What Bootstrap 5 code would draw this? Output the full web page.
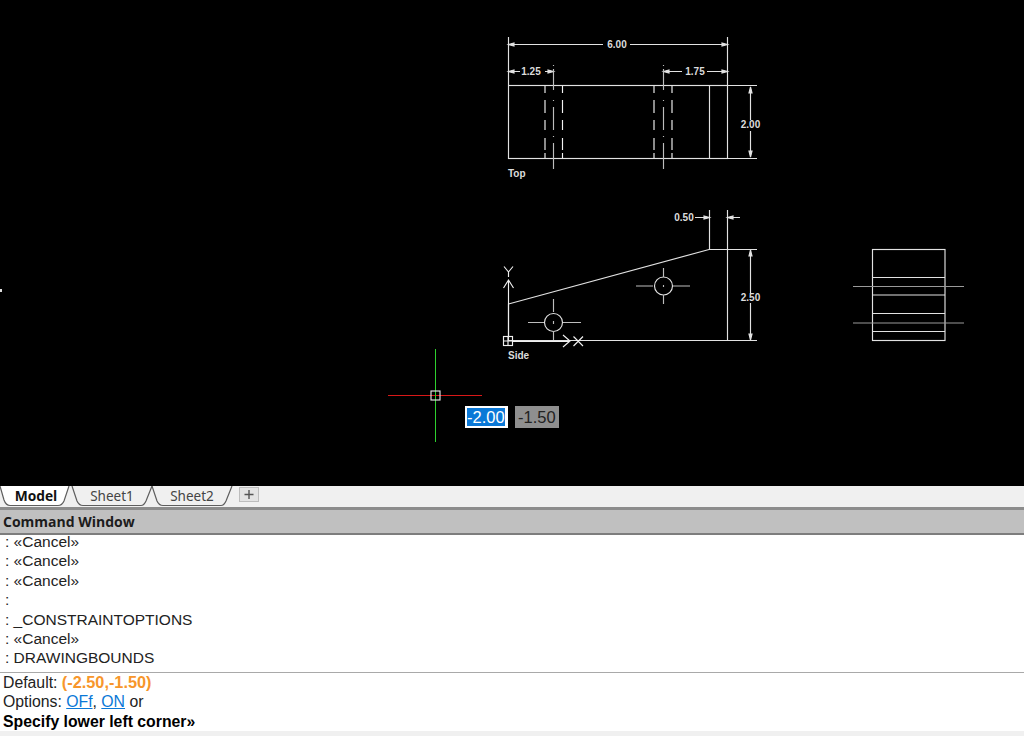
<!DOCTYPE html>
<html lang="en">
<head>
<meta charset="utf-8">
<title>Drawing</title>
<link href="https://cdn.jsdelivr.net/npm/bootstrap@5.3.0/dist/css/bootstrap.min.css" rel="stylesheet">
<style>
html,body{height:736px;overflow:hidden;background:#f0f0f0}
body{font-family:"Liberation Sans",Arial,sans-serif}
.cad-shell{width:1024px;height:736px}
.cad-view{height:486px;background:#000;flex:none}
.cad-view svg{display:block}
.cad-lbl{font:bold 10px "Liberation Sans",Arial,sans-serif;fill:#dcdcdc}
.cad-in{height:22px;font-size:16.5px;line-height:22px;top:406px}
.cad-in-x{left:465px;width:43px;background:#fff;padding:2px 3px 2px 2px}
.cad-in-x span{display:block;height:18px;line-height:18px;background:#0a78d7;color:#fff;width:38px}
.cad-in-y{left:515px;width:44px;background:#8f8f8f;color:#222;padding-left:3px}
.cad-tabs{height:21px;background:#f0f0f0;flex:none}
.cad-tabs svg{left:0;top:0}
.cad-tab{font-family:"Noto Sans",sans-serif;font-size:13.5px;line-height:20px;color:#444;text-align:center}
.cad-tab-model{width:72px;font-family:"Open Sans",sans-serif;font-weight:700;font-size:13.8px;color:#111}
.cad-tab-s1{width:80px}
.cad-tab-s2{width:80px}
.cad-head{height:28px;background:#c0c0c0;border-top:3px solid #8c8c8c;border-bottom:2px solid #7d7d7d;font-size:14px;font-weight:700;line-height:23px;color:#1c1c1c;padding-left:3px;flex:none;font-family:"Open Sans",sans-serif}
.cad-hist{height:138px;background:#fff;border-bottom:1px solid #a9a9a9;padding-left:5px;flex:none;font-size:15.5px;line-height:19.4px;color:#222}
.cad-hist-in{margin-top:-3px}
.cad-prompt{height:58px;background:#fff;padding-left:3px;font-size:15.8px;line-height:19.4px;color:#222;flex:none}
.cad-def{color:#f7962b;font-weight:700;font-size:16.3px}
.cad-opt{color:#0a78d7;text-decoration:underline}
.cad-foot{flex:1;background:#f0f0f0}
</style>
</head>
<body>
<div class="cad-shell d-flex flex-column">
  <div class="cad-view position-relative">
    <svg width="1024" height="486" viewBox="0 0 1024 486" fill="none" stroke="#e2e2e2" stroke-width="1.150">
      <rect x="0" y="289" width="2" height="3" fill="#ddd" stroke="none"/>
      <!-- top view -->
      <rect x="508.500" y="85.500" width="219" height="73"/>
      <path d="M508.500 37V85M727.500 37V85M709.500 85V158M727 85.500H757M727 158.500H757M750.500 89V120M750.500 131V155"/>
      <path d="M512 44.500H603M630 44.500H723M512 71.500H520M545 71.500H549M667 71.500H682M707 71.500H723"/>
      <path d="M508.500 44.500L514 43V46ZM727.500 44.500L722 43V46ZM508.500 71.500L514 70V73ZM553.500 71.500L548 70V73ZM663.500 71.500L669 70V73ZM727.500 71.500L722 70V73Z" fill="#e2e2e2"/>
      <path d="M750.500 87L749 93H752ZM750.500 157L749 151H752Z" fill="#e2e2e2"/>
      <path d="M553.500 65V66M553.500 69V90M553.500 100V101M553.500 107V130M553.500 136V137M553.500 143V169M663.500 65V66M663.500 69V90M663.500 100V101M663.500 107V130M663.500 136V137M663.500 143V169" stroke="#bdbdbd"/>
      <path d="M545 86V93M545 100V113M545 120V130M545 138V150M545 153V158M562.500 86V93M562.500 100V113M562.500 120V130M562.500 138V150M562.500 153V158M654 86V93M654 100V113M654 120V130M654 138V150M654 153V158M672 86V93M672 100V113M672 120V130M672 138V150M672 153V158" stroke="#f2f2f2"/>
      <text class="cad-lbl" stroke="none" x="617" y="48" text-anchor="middle">6.00</text>
      <text class="cad-lbl" stroke="none" x="531" y="75" text-anchor="middle">1.25</text>
      <text class="cad-lbl" stroke="none" x="695" y="75" text-anchor="middle">1.75</text>
      <text class="cad-lbl" stroke="none" x="750.500" y="127.500" text-anchor="middle">2.00</text>
      <text class="cad-lbl" stroke="none" x="508" y="177">Top</text>
      <!-- side view -->
      <path d="M508.500 304V340.500H757M508.500 304L709 249.500H757M727.500 210V340.500M709.500 210V249M750.500 253V293M750.500 303V337"/>
      <path d="M695 217.500H709M727 217.500H740"/>
      <path d="M709.500 217.500L704 216V219ZM727.500 217.500L733 216V219ZM750.500 250L749 256H752ZM750.500 340L749 334H752Z" fill="#e2e2e2"/>
      <circle cx="553.500" cy="322.500" r="9"/>
      <circle cx="663.500" cy="286" r="9"/>
      <path d="M528 322.500H544M563 322.500H581M553.500 299V312M553.500 331V340M636 286H653M673 286H690M663.500 268V277M663.500 295V304M553.500 321V324M663.500 285V287" stroke="#bdbdbd"/>
      <text class="cad-lbl" stroke="none" x="684" y="221" text-anchor="middle">0.50</text>
      <text class="cad-lbl" stroke="none" x="750.500" y="301" text-anchor="middle">2.50</text>
      <text class="cad-lbl" stroke="none" x="508" y="359">Side</text>
      <!-- UCS icon -->
      <g stroke="#f0f0f0">
        <rect x="503.500" y="336.500" width="9" height="9"/>
        <path d="M508 336V345M503.500 341H512.500M508.500 336V281M503.500 288L508.500 280L513.500 288"/>
        <path d="M512 341.500H569M563 335L570 341L563 347M573.500 336.500L583 346M583 336.500L573.500 346M504 266.500L508.500 272M513 266.500L508.500 272M508.500 272V277"/>
      </g>
      <!-- right view -->
      <rect x="872.500" y="249.500" width="72.500" height="91"/>
      <path d="M872.500 277.500H945M872.500 295H945M872.500 313.500H945M872.500 331.500H945"/>
      <path d="M853 286.500H964M853 323H964" stroke="#9a9a9a"/>
      <!-- crosshair -->
      <path d="M388 395.500H482" stroke="#d81818" stroke-width="1"/>
      <path d="M435.500 349V442" stroke="#2ed02e" stroke-width="1"/>
      <rect x="431" y="391" width="9" height="9" stroke="#e6e6e6"/>
    </svg>
    <div class="cad-in cad-in-x position-absolute"><span>-2.00</span></div>
    <div class="cad-in cad-in-y position-absolute">-1.50</div>
  </div>
  <div class="cad-tabs position-relative d-flex">
    <svg class="position-absolute" width="270" height="21" viewBox="0 0 270 21" fill="none">
      <path d="M152 0 L157 15 Q159 19.500 163 19.500 H221 Q224 19.500 226 15 L232 0" fill="#f0f0f0" stroke="#5e5e5e" stroke-width="1.200"/>
      <path d="M72 0 L77 15 Q79 19.500 83 19.500 H141 Q144 19.500 146 15 L152 0" fill="#f0f0f0" stroke="#5e5e5e" stroke-width="1.200"/>
      <path d="M0 0 L4 14 Q6 19.500 10 19.500 H58 Q62 19.500 64 15 L69 0" fill="#fff" stroke="#5e5e5e" stroke-width="1.200"/>
      <rect x="239.500" y="1.500" width="19" height="14" fill="#e4e4e4" stroke="#bdbdbd"/>
      <path d="M249 4V13M244.500 8.500H253.500" stroke="#555" stroke-width="1.400"/>
    </svg>
    <span class="cad-tab cad-tab-model position-relative">Model</span>
    <span class="cad-tab cad-tab-s1 position-relative">Sheet1</span>
    <span class="cad-tab cad-tab-s2 position-relative">Sheet2</span>
  </div>
  <div class="cad-head">Command Window</div>
  <div class="cad-hist">
    <div class="cad-hist-in">
      <div>: «Cancel»</div>
      <div>: «Cancel»</div>
      <div>: «Cancel»</div>
      <div>:</div>
      <div>: _CONSTRAINTOPTIONS</div>
      <div>: «Cancel»</div>
      <div>: DRAWINGBOUNDS</div>
    </div>
  </div>
  <div class="cad-prompt">
    <div>Default: <span class="cad-def">(-2.50,-1.50)</span></div>
    <div>Options: <span class="cad-opt">OFf</span>, <span class="cad-opt">ON</span> or</div>
    <div class="fw-bold text-black">Specify lower left corner»</div>
  </div>
  <div class="cad-foot"></div>
</div>
<script src="https://cdn.jsdelivr.net/npm/bootstrap@5.3.0/dist/js/bootstrap.bundle.min.js"></script>
</body>
</html>
